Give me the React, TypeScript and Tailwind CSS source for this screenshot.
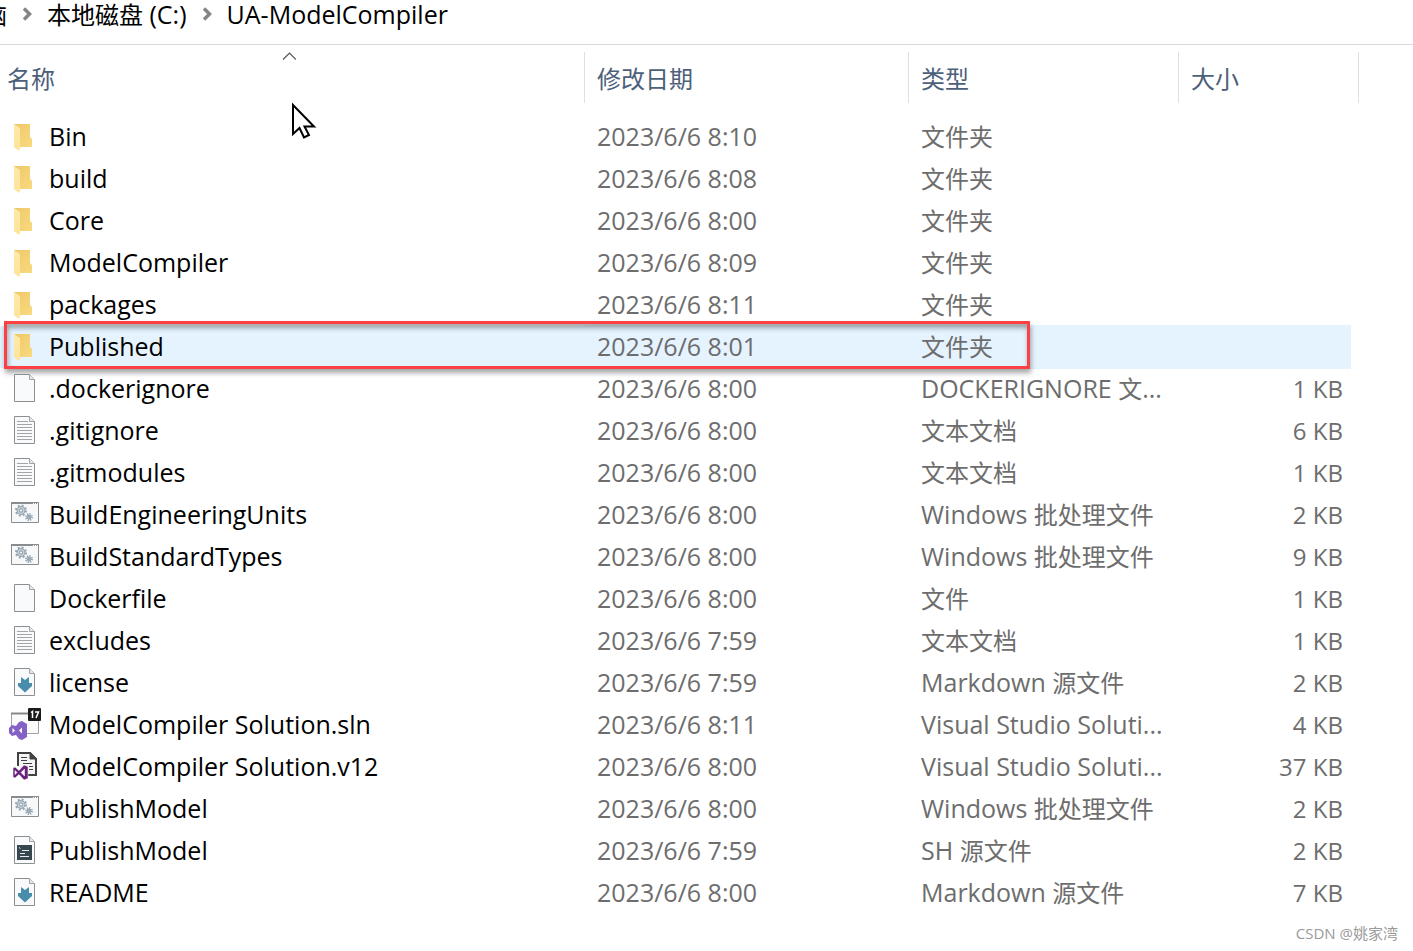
import React from "react";

type Kind = "folder" | "blank" | "text" | "batch" | "markdown" | "solution" | "solution12" | "shell";

interface Entry {
  name: string;
  date: string;
  type: string;
  size?: string;
  kind: Kind;
  active?: boolean;
}

const entries: Entry[] = [
  { name: "Bin", date: "2023/6/6 8:10", type: "文件夹", kind: "folder" },
  { name: "build", date: "2023/6/6 8:08", type: "文件夹", kind: "folder" },
  { name: "Core", date: "2023/6/6 8:00", type: "文件夹", kind: "folder" },
  { name: "ModelCompiler", date: "2023/6/6 8:09", type: "文件夹", kind: "folder" },
  { name: "packages", date: "2023/6/6 8:11", type: "文件夹", kind: "folder" },
  { name: "Published", date: "2023/6/6 8:01", type: "文件夹", kind: "folder", active: true },
  { name: ".dockerignore", date: "2023/6/6 8:00", type: "DOCKERIGNORE 文...", size: "1 KB", kind: "blank" },
  { name: ".gitignore", date: "2023/6/6 8:00", type: "文本文档", size: "6 KB", kind: "text" },
  { name: ".gitmodules", date: "2023/6/6 8:00", type: "文本文档", size: "1 KB", kind: "text" },
  { name: "BuildEngineeringUnits", date: "2023/6/6 8:00", type: "Windows 批处理文件", size: "2 KB", kind: "batch" },
  { name: "BuildStandardTypes", date: "2023/6/6 8:00", type: "Windows 批处理文件", size: "9 KB", kind: "batch" },
  { name: "Dockerfile", date: "2023/6/6 8:00", type: "文件", size: "1 KB", kind: "blank" },
  { name: "excludes", date: "2023/6/6 7:59", type: "文本文档", size: "1 KB", kind: "text" },
  { name: "license", date: "2023/6/6 7:59", type: "Markdown 源文件", size: "2 KB", kind: "markdown" },
  { name: "ModelCompiler Solution.sln", date: "2023/6/6 8:11", type: "Visual Studio Soluti...", size: "4 KB", kind: "solution" },
  { name: "ModelCompiler Solution.v12", date: "2023/6/6 8:00", type: "Visual Studio Soluti...", size: "37 KB", kind: "solution12" },
  { name: "PublishModel", date: "2023/6/6 8:00", type: "Windows 批处理文件", size: "2 KB", kind: "batch" },
  { name: "PublishModel", date: "2023/6/6 7:59", type: "SH 源文件", size: "2 KB", kind: "shell" },
  { name: "README", date: "2023/6/6 8:00", type: "Markdown 源文件", size: "7 KB", kind: "markdown" },
];

/** Sets Chinese runs one step smaller than the Latin text beside them. */
function Mixed({ text }: { text: string }) {
  return (
    <>
      {text.split(/([\u4e00-\u9fff]+)/).map((part, i) =>
        i % 2 === 1 ? (
          <span key={i} className="text-[24px]">
            {part}
          </span>
        ) : (
          part
        ),
      )}
    </>
  );
}

function Sheet() {
  return (
    <>
      <path d="M5.5 1.5h15l5 5v22h-20z" fill="#f9fafb" stroke="#8c8f92" />
      <path d="M20.5 1.5v5h5" fill="#e6e8ea" stroke="#a0a3a6" />
    </>
  );
}

function Gear({ x, y, r }: { x: number; y: number; r: number }) {
  const tooth = (r * Math.PI) / 8;
  return (
    <g transform={`translate(${x} ${y})`}>
      <circle r={r} fill="none" stroke="#94a3af" strokeWidth="2" strokeDasharray={`${tooth} ${tooth}`} />
      <circle r={r - 1} fill="#c6d3dc" stroke="#94a3af" strokeWidth="1" />
      <circle r={r / 3} fill="#f4f6f8" stroke="#85929d" strokeWidth="1" />
    </g>
  );
}

function FileIcon({ kind }: { kind: Kind }) {
  return (
    <svg viewBox="0 0 32 32" className="size-8 shrink-0 overflow-visible" aria-hidden="true">
      {kind === "folder" && (
        <>
          <defs>
            <linearGradient id="folderBack" x1="0" y1="0" x2="1" y2="1">
              <stop offset="0" stopColor="#eec868" />
              <stop offset="1" stopColor="#f9da80" />
            </linearGradient>
            <linearGradient id="folderFlap" x1="0" y1="0" x2="0" y2="1">
              <stop offset="0" stopColor="#ffe9a8" />
              <stop offset="1" stopColor="#fde49a" />
            </linearGradient>
          </defs>
          <path d="M5 3h16v13l2 2v8H5z" fill="url(#folderBack)" />
          <path d="M5 3l6 4v21l-1 2-5-4z" fill="url(#folderFlap)" />
        </>
      )}
      {(kind === "blank" || kind === "text" || kind === "markdown" || kind === "shell") && <Sheet />}
      {kind === "text" && (
        <path d="M8 6.5h11M8 9.5h15M8 12.5h15M8 15.5h15M8 18.5h15M8 21.5h15M8 24.5h15" stroke="#a3a6a9" strokeWidth="1" />
      )}
      {kind === "markdown" && <path d="M12 10l4 3 4-3v6h3v3l-7 6.500-7-6.500v-3h3z" fill="#4a8cab" />}
      {kind === "shell" && (
        <>
          <path d="M8 10h15v15H8z" fill="#37474f" />
          <path d="M10 12.5l1.500 1M13 15.500h7M11 18.500h5M11 21.500h9" stroke="#e8edf0" strokeWidth="1" />
        </>
      )}
      {kind === "batch" && (
        <>
          <path d="M2.500 3.500h27v20h-27z" fill="#f7f8f9" stroke="#8a8d90" />
          <path d="M2 4h28" stroke="#8a8d90" strokeWidth="2" />
          <path d="M24 4.500h5" stroke="#fff" strokeWidth="1" strokeDasharray="1 1" />
          <Gear x={12} y={11.5} r={5} />
          <Gear x={20} y={18} r={3} />
        </>
      )}
      {kind === "solution" && (
        <>
          <path d="M2.500 4.500h27v20h-27z" fill="#fbfbfc" stroke="#a0a3a6" />
          <path d="M2 4.500h18" stroke="#85888b" strokeWidth="2" />
          <path
            fillRule="evenodd"
            d="M0 19l3-3 4 1 3-4 3-1 5 3v13l-5 3-3-1-3-4-4 1-3-3zM3.500 19v5L6 21.500zM13 18.500l-3 3 3 3z"
            fill="#8661c5"
          />
          <rect x="19" y="-1" width="13" height="13" rx="1" fill="#1b1b1b" />
          <path d="M22 3.500l1.500-1V9M26 3h3.500L27 9" fill="none" stroke="#fff" strokeWidth="1.500" />
        </>
      )}
      {kind === "solution12" && (
        <>
          <path d="M9 15V2h12l6 6v16H18" fill="#f4f4f5" stroke="#424242" strokeWidth="2" />
          <path d="M21 1v7h7z" fill="#424242" stroke="#424242" />
          <path d="M12 6.500h6M12 9.500h6M14 12.500h9M20 15.500h4M20 18.500h4" stroke="#424242" strokeWidth="1" />
          <path
            fillRule="evenodd"
            d="M4 17l2-1 4 3.500 5-5.500 4 1.500v12L15 29l-5-5.500L6 27l-2-1zM6 19.500v4l2-2zM15.500 18l-3.500 3.500 3.500 3.500z"
            fill="#68217a"
            stroke="#fff"
            strokeWidth="0.500"
          />
        </>
      )}
    </svg>
  );
}

function Crumb({ label }: { label: string }) {
  return (
    <a href="#" className="whitespace-nowrap">
      <Mixed text={label} />
    </a>
  );
}

function Separator() {
  return (
    <svg viewBox="0 0 10 14" className="mx-[15px] h-[14px] w-[10px] shrink-0" aria-hidden="true">
      <path d="M2 1.500L7.500 7 2 12.500" fill="none" stroke="#858585" strokeWidth="3.500" />
    </svg>
  );
}

function Heading({ label, colSpan, first }: { label: string; colSpan?: number; first?: boolean }) {
  return (
    <th scope="col" colSpan={colSpan} className="h-[71px] p-0 pb-[6px] text-left font-normal">
      <button
        type="button"
        className={
          first
            ? "relative flex h-[51px] w-full items-center border-r border-[#e0e0e0] pl-[7px]"
            : "flex h-[51px] w-full items-center border-r border-[#e0e0e0] pl-3"
        }
      >
        <span className="pt-px">
          <Mixed text={label} />
        </span>
        {first && (
          <svg viewBox="0 0 14 8" className="absolute top-0 left-[282px] h-2 w-[14px]" aria-hidden="true">
            <path d="M1 7.500L7.500 1 14 7.500" fill="none" stroke="#555" strokeWidth="1.200" />
          </svg>
        )}
      </button>
    </th>
  );
}

export default function App() {
  return (
    <main className="relative min-h-screen overflow-hidden bg-white font-['Open_Sans','Noto_Sans_CJK_SC',sans-serif] text-[25px] leading-7 text-black">
      <nav aria-label="路径" className="-ml-[17px] flex h-[45px] items-center border-b border-[#d9d9d9] pb-4">
        <Crumb label="脑" />
        <Separator />
        <Crumb label="本地磁盘 (C:)" />
        <Separator />
        <Crumb label="UA-ModelCompiler" />
      </nav>

      <table className="w-full table-fixed border-collapse">
        <colgroup>
          <col className="w-[585px]" />
          <col className="w-[324px]" />
          <col className="w-[270px]" />
          <col className="w-[172px]" />
          <col className="w-[8px]" />
          <col />
        </colgroup>
        <thead className="text-[#4c607a]">
          <tr>
            <Heading label="名称" first />
            <Heading label="修改日期" />
            <Heading label="类型" />
            <Heading label="大小" colSpan={2} />
            <td />
          </tr>
        </thead>
        <tbody className="text-[#6d6d6d]">
          {entries.map((entry, index) => {
            const fill = entry.active ? "bg-[#e5f3ff] shadow-[0_1px_#e5f3ff,0_-1px_#e5f3ff]" : "";
            return (
              <tr key={index} className="h-[42px]">
                <td className={`relative p-0 text-black ${fill}`}>
                  <div className="flex items-center gap-2 pl-[9px]">
                    <FileIcon kind={entry.kind} />
                    <span className="pb-[2px] whitespace-nowrap">{entry.name}</span>
                  </div>
                  {entry.active && (
                    <div className="absolute -top-[5px] left-1 h-[48px] w-[1026px] border-[3px] border-[#fb4143] shadow-[1px_4px_5px_rgba(0,0,0,0.35),inset_1px_4px_5px_rgba(0,0,0,0.35)]" />
                  )}
                </td>
                <td className={`p-0 pb-[2px] pl-3 whitespace-nowrap ${fill}`}>{entry.date}</td>
                <td className={`p-0 pb-[2px] pl-3 whitespace-nowrap ${fill}`}>
                  <Mixed text={entry.type} />
                </td>
                <td className={`p-0 pr-2 text-right text-[24px] whitespace-nowrap ${fill}`}>{entry.size}</td>
              </tr>
            );
          })}
        </tbody>
      </table>

      <footer className="flex justify-end pt-[9px] pr-[15px] text-[15px] leading-5 text-[#9a9a9a]">CSDN @姚家湾</footer>

      <svg viewBox="0 0 26 38" className="absolute top-[102px] left-[291px] h-[38px] w-[26px]" aria-hidden="true">
        <path d="M2 3v29l6.500-6 4.500 9.500 5-2.500-4.500-8.500H23z" fill="#fff" stroke="#000" strokeWidth="2" />
      </svg>
    </main>
  );
}
